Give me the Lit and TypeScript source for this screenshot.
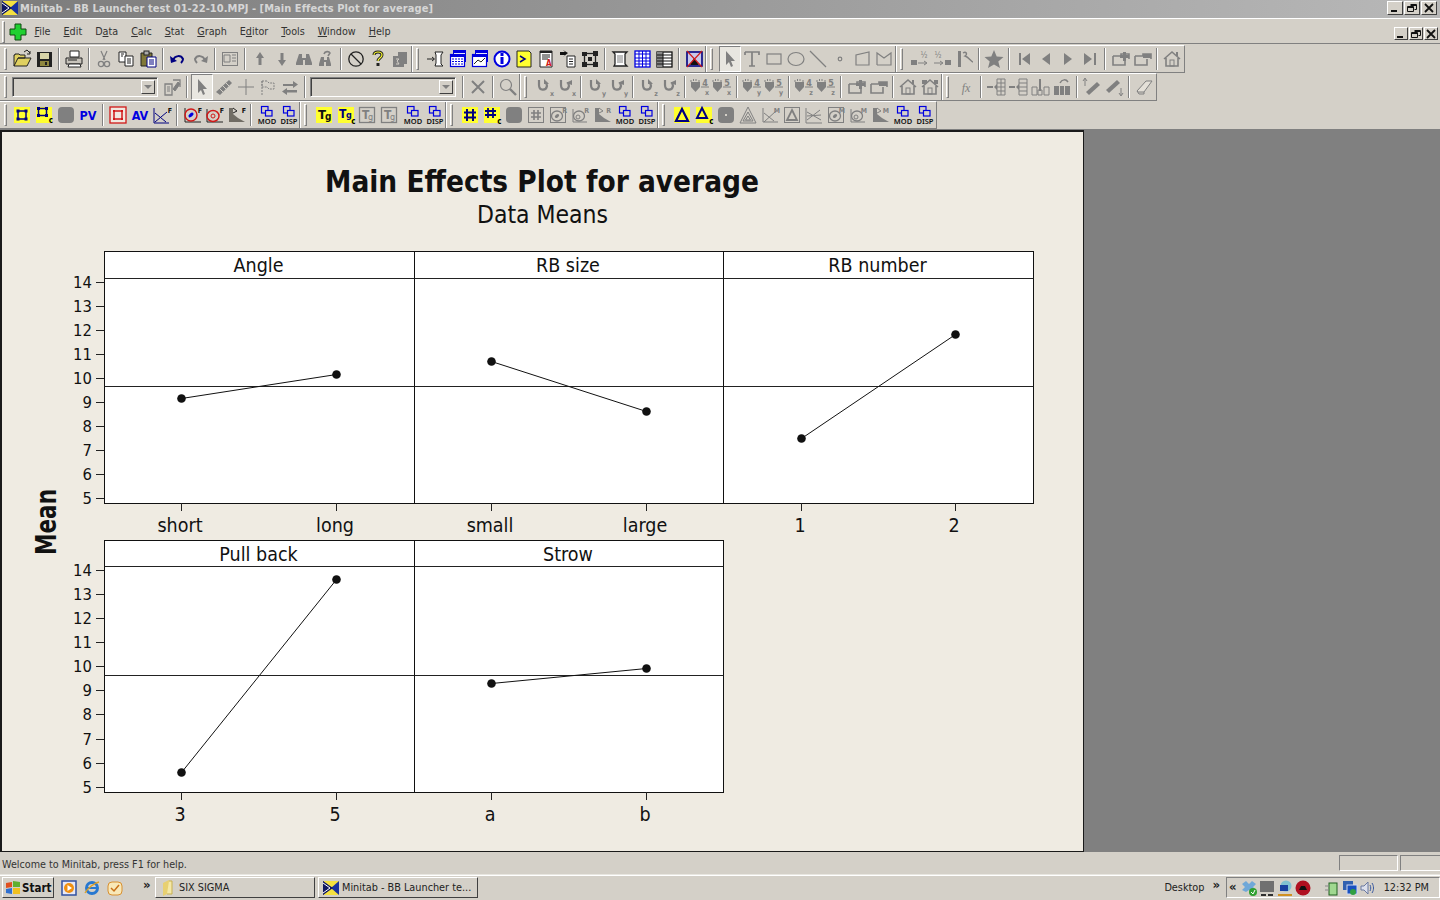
import { LitElement, html, css, svg } from "lit";
import { customElement } from "lit/decorators.js";

const G = "#808080";
const N = "#000080";
const B = "#0000e0";
const R = "#d01818";
const Y = "#ffff30";

const grey = (f: any) => svg`<g fill="none" stroke="${G}" stroke-width="1.2">${f}</g>`;
const mini = (t: string, col = "#000", x = 19.5, y = 19, s = 7) =>
  svg`<text x="${x}" y="${y}" text-anchor="end" font-size="${s}" font-weight="700" fill="${col}" font-family="DejaVu Sans" stroke="none">${t}</text>`;
const ybg = svg`<rect x="2" y="2" width="16" height="16" fill="${Y}"/>`;
const overlap = (t: string) => svg`<g fill="none" stroke="${B}" stroke-width="1.2"><rect x="5.5" y="1.5" width="6.5" height="6.5"/><rect x="9.5" y="5.5" width="6.5" height="5.5" fill="#d4d0c8"/></g><text x="11" y="18.5" text-anchor="middle" font-size="7.5" font-weight="600" fill="#111" font-family="Noto Sans">${t}</text>`;
const ringP = (c1: string, c2: string) => svg`<path d="M3 17H19M3 17V3" stroke="#222" fill="none"/><ellipse cx="9" cy="10" rx="6" ry="6" fill="none" stroke="${c1}" stroke-width="1.4"/><ellipse cx="9" cy="10" rx="3" ry="1.7" transform="rotate(-40 9 10)" fill="${c2}"/>`;
const ringG = (l: string) => svg`<rect x="2.5" y="2.5" width="15" height="15" fill="none" stroke="${G}"/><ellipse cx="9" cy="11" rx="5.5" ry="5" fill="none" stroke="${G}" stroke-width="1.3"/><ellipse cx="9" cy="11" rx="2.5" ry="1.5" transform="rotate(-40 9 11)" fill="${G}"/>${mini(l, G, 19, 8, 7)}`;
const ring2G = (l: string) => svg`<path d="M3 17H17M3 17V4" stroke="${G}" fill="none"/><ellipse cx="9" cy="11" rx="5.5" ry="5" fill="none" stroke="${G}" stroke-width="1.3"/><circle cx="8" cy="12" r="2" fill="none" stroke="${G}"/>${mini(l, G, 19, 8, 7)}`;
const hillG = (l: string) => svg`<path d="M3 3V17H19L12 13 7 9V3Z" fill="${G}"/><path d="M7 3L11 6 7 8" fill="#d4d0c8" stroke="${G}"/>${mini(l, G, 19, 8, 7)}`;
const crossG = (l: string) => svg`<path d="M3 3V17H18M4 17L16 6M4 8L14 16" fill="none" stroke="${G}"/>${mini(l, G, 20, 8, 7)}`;
const tg = (c: string) => svg`<rect x="1.5" y="2.5" width="15" height="15" fill="none" stroke="${G}" stroke-width="1.3"/><text x="4" y="14" font-size="12" font-weight="700" fill="${G}" font-family="DejaVu Sans">T</text><text x="10" y="15" font-size="9" fill="${G}" font-family="DejaVu Sans">${c}</text>`;
const curl = (d: string, a: string) => svg`<path d="M5 3V8C5 14 12 14 13 9L12 5" fill="none" stroke="${G}" stroke-width="2.2"/><path d="M${d}" fill="${G}"/>${mini(a, G, 20, 19, 7)}`;
const drop = (n: string, a: string) => svg`<path d="M1 5H10V10L5.5 15 1 10Z" fill="${G}"/><path d="M1 3v2M3.5 2v2M6 2v2M9 3v2" stroke="${G}"/><text x="15" y="9" text-anchor="middle" font-size="9" font-weight="700" fill="${G}" font-family="DejaVu Sans">${n}</text><path d="M11 10H19" stroke="${G}"/>${mini(a, G, 19, 18, 7)}`;
const folderP = (plus: boolean) => svg`<path d="M3 7H11V5H19V10M3 7V16H15V10" fill="none" stroke="${G}" stroke-width="1.6"/>${plus ? svg`<path d="M13 3H16V6H19V9H16V12H13V9H10V6H13Z" fill="${G}"/>` : svg`<path d="M11 5H19V9H11Z" fill="${G}"/>`}`;
const house = (extra: boolean) => svg`<path d="M2 10L10 3 18 10M4 9V17H16V9" fill="none" stroke="${G}" stroke-width="1.6"/><rect x="8" y="11" width="4" height="6" fill="none" stroke="${G}"/>${extra ? svg`<path d="M2 3H7V7H2ZM14 3H18V7H14Z" fill="${G}"/>` : svg`<path d="M14 3H16V7H14Z" fill="${G}"/>`}`;
const blueWin = (inner: any) => svg`<rect x="5.5" y="1.5" width="12" height="11" fill="#fff" stroke="${B}"/><rect x="5" y="1" width="13" height="3" fill="${B}"/><rect x="2.5" y="5.5" width="14" height="12" fill="#fff" stroke="${B}" stroke-width="1.2"/><rect x="2" y="5" width="15" height="3" fill="${B}"/>${inner}`;

const icons: Record<string, any> = {
  open: svg`<path d="M2 17V6H3V5H7L8 6H13V9H6L2 17H15L19 9H6" fill="#e0d060" stroke="#222"/><path d="M12 3L15 1 18 4M18 2V5H15" fill="none" stroke="#222"/>`,
  save: svg`<rect x="3" y="3" width="15" height="15" fill="#222"/><rect x="6" y="4" width="9" height="6" fill="#d8d4a8"/><rect x="6" y="12" width="9" height="5" fill="#908840"/><rect x="11" y="13" width="2" height="3" fill="#222"/>`,
  print: svg`<path d="M6 2H15V8H6Z" fill="#fff" stroke="#222"/><path d="M2 9H18V15H2Z" fill="#c8c4bc" stroke="#222"/><path d="M5 15H16L17 18H4Z" fill="#fff" stroke="#222"/><path d="M4 11H13" stroke="#222"/>`,
  cut: svg`<path d="M7 2L11 11M13 2L9 11" stroke="${G}" stroke-width="1.2"/><circle cx="7" cy="15" r="2.6" fill="none" stroke="${G}" stroke-width="1.3"/><circle cx="13" cy="15" r="2.6" fill="none" stroke="${G}" stroke-width="1.3"/>`,
  copy: svg`<path d="M3 3H10V13H3Z" fill="#fff" stroke="#222"/><path d="M9 7H17V17H9Z" fill="#fff" stroke="#222"/><path d="M5 5H8M5 7H7M11 10H15M11 12H15M11 14H15" stroke="#222"/>`,
  paste: svg`<path d="M3 4H14V17H3Z" fill="#807838" stroke="#222"/><rect x="6" y="2" width="5" height="4" fill="#aaa" stroke="#222"/><path d="M9 8H18V18H9Z" fill="#fff" stroke="${N}"/><path d="M11 11H16M11 13H16M11 15H16" stroke="${N}"/>`,
  undo: svg`<path d="M5 11C7 6 13 6 15 10 15 12 14 13 13 14" fill="none" stroke="${N}" stroke-width="2"/><path d="M2 7L9 12 3 14Z" fill="${N}"/>`,
  redo: svg`<path d="M15 11C13 6 7 6 5 10 5 12 6 13 7 14" fill="none" stroke="${G}" stroke-width="2"/><path d="M18 7L11 12 17 14Z" fill="${G}"/>`,
  sess: svg`<rect x="2.5" y="3.5" width="15" height="13" fill="none" stroke="${G}"/><path d="M4 6H10V13H4ZM12 6H16M12 9H16M12 12H16" stroke="${G}" fill="none"/>`,
  up: svg`<path d="M10 3L14 9H11.5V16H8.5V9H6Z" fill="${G}"/>`,
  down: svg`<path d="M10 17L14 11H11.5V4H8.5V11H6Z" fill="${G}"/>`,
  find: svg`<path d="M2 14L5 5H8V9H12V5H15L18 14V16H11V11H9V16H2Z" fill="${G}"/>`,
  findr: svg`<path d="M3 15L5 8H8V11H11V8H13L15 15V17H10V13H8V17H3Z" fill="${G}"/><path d="M8 5C9 2 13 2 14 4L12 7" fill="none" stroke="${G}" stroke-width="1.6"/>`,
  stop: svg`<circle cx="10" cy="10" r="7.2" fill="none" stroke="#222" stroke-width="1.3"/><path d="M5 5L15 15" stroke="#222" stroke-width="1.3"/>`,
  help: svg`<path d="M6 6C6 2 14 2 14 6 14 9 10 9 10 12" fill="none" stroke="#222" stroke-width="3"/><path d="M6 6C6 2 14 2 14 6 14 9 10 9 10 12" fill="none" stroke="${Y}" stroke-width="1.2"/><rect x="8.5" y="14" width="3" height="3" fill="#222"/>`,
  sigma: svg`<path d="M8 3H17V15H14V18H3V7H8Z" fill="${G}"/><path d="M6 10H9L7 12 9 15H6" fill="none" stroke="#d4d0c8"/>`,
  proj: svg`<path d="M9 3H17L15 6V15L17 17H9L10 14V6Z" fill="#fff" stroke="#222"/><path d="M1 10H8M6 8L8.5 10 6 12" fill="none" stroke="#222"/>`,
  dataw: blueWin(svg`<path d="M4 10H15M4 12.5H15M4 15H15" stroke="${B}" stroke-dasharray="2 1"/>`),
  graphw: blueWin(svg`<path d="M4 15L8 11 11 13 15 9" stroke="#222" fill="none"/>`),
  info: svg`<circle cx="10" cy="10" r="7.5" fill="#fff" stroke="${B}" stroke-width="2"/><rect x="8.5" y="8" width="3" height="7" fill="${B}"/><rect x="8.5" y="4" width="3" height="3" fill="${B}"/>`,
  hist: svg`<path d="M3 2H15L17 4V18H3Z" fill="${Y}" stroke="#222"/><path d="M6 7L11 10 6 13" fill="none" stroke="${N}" stroke-width="1.5"/>`,
  rep: svg`<path d="M4 2H16V18H4Z" fill="#fff" stroke="#222"/><path d="M4 2H16V4H4Z" fill="#222"/><path d="M6 6H14M6 8H14M6 10H12" stroke="#222"/><text x="10" y="17" font-size="8" font-weight="700" fill="${R}" font-family="DejaVu Sans">A</text>`,
  tolist: svg`<path d="M2 3L7 3 5 1 10 4 5 8 7 6H2Z" fill="#111"/><path d="M9 7H17V18H9Z" fill="#fff" stroke="#222"/><path d="M11 10H15M11 12.5H15M11 15H15" stroke="#222"/>`,
  node: svg`<rect x="4.5" y="4.5" width="11" height="11" fill="none" stroke="#222" stroke-width="1.3"/><path d="M2 3H7V7H2ZM13 2H18V7H13ZM2 13H7V18H2ZM13 13H18V18H13ZM8 8H12V12H8Z" fill="#222"/>`,
  scroll: svg`<path d="M3 3H17L15 5V15L17 17H4L5 15V5Z" fill="#fff" stroke="#222" stroke-width="1.3"/><path d="M7 7H13M7 9H13M7 11H13M7 13H13" stroke="${G}"/>`,
  bgrid: svg`<rect x="3" y="2" width="15" height="16" fill="#fff" stroke="${B}" stroke-width="1.3"/><path d="M3 5H18M3 9H18M3 12H18M3 15H18M7 2V18M10.5 2V18M14 2V18" stroke="${B}"/>`,
  kgrid: svg`<rect x="3" y="3" width="15" height="15" fill="#fff" stroke="#111" stroke-width="1.3"/><path d="M3 3H9V18H3Z" fill="#888"/><path d="M3 6H18M3 9H18M3 12H18M3 15H18M9 3V18" stroke="#111"/>`,
  xwin: svg`<rect x="3" y="3" width="15" height="14" fill="#c8c8e8" stroke="${N}" stroke-width="1.6"/><path d="M6 16L10 9 15 16Z" fill="#111"/><path d="M3 2L18 18M18 2L3 18" stroke="${R}" stroke-width="1.1"/>`,
  arrow: svg`<path d="M6 2V16L9 13 11 18 13 17 11 12H15Z" fill="${G}"/>`,
  T: svg`<path d="M3 3H17V6M3 3V6M10 3V17M7 17H13" fill="none" stroke="${G}" stroke-width="1.7"/>`,
  rect: grey(svg`<rect x="3" y="5" width="14" height="10"/>`),
  ell: grey(svg`<ellipse cx="10" cy="10" rx="8" ry="6.5"/>`),
  line: grey(svg`<path d="M2 2L18 18"/>`),
  dot: grey(svg`<circle cx="10" cy="10" r="1.8"/>`),
  poly: grey(svg`<path d="M4 6V16H17V3Z"/>`),
  pline: grey(svg`<path d="M3 16V4L10 9 17 4V16H3"/>`),
  ralign: svg`<rect x="1" y="11" width="6" height="5" fill="${G}"/><path d="M8 14H16M14 12L17 14 14 16" stroke="${G}" fill="none"/><text x="14" y="9" text-anchor="middle" font-size="8" fill="${G}" font-family="DejaVu Sans">½</text>`,
  lalign: svg`<rect x="13" y="11" width="6" height="5" fill="${G}"/><path d="M2 14H10M8 12L11 14 8 16" stroke="${G}" fill="none"/><text x="6" y="9" text-anchor="middle" font-size="8" fill="${G}" font-family="DejaVu Sans">½</text>`,
  brushb: svg`<rect x="4" y="2" width="3" height="16" fill="${G}"/><path d="M9 4C12 2 14 5 11 7 15 8 17 13 19 13" fill="none" stroke="${G}" stroke-width="1.4"/>`,
  star: svg`<path d="M10 1L12.7 7.5 19.5 8 14.3 12.5 16 19 10 15.5 4 19 5.7 12.5 0.5 8 7.3 7.5Z" fill="${G}"/>`,
  first: svg`<path d="M5 4H7V16H5ZM16 4V16L8 10Z" fill="${G}"/>`,
  prev: svg`<path d="M14 4V16L6 10Z" fill="${G}"/>`,
  next: svg`<path d="M6 4V16L14 10Z" fill="${G}"/>`,
  last: svg`<path d="M14 4H16V16H14ZM4 4V16L12 10Z" fill="${G}"/>`,
  fadd: folderP(true),
  fsub: folderP(false),
  home: house(false),
  home2: house(true),
  props: svg`<path d="M3 7H10V18H3ZM11 3H18V10" fill="none" stroke="${G}" stroke-width="1.3"/><path d="M5 10H8M5 12H8M5 14H8M11 12L16 5 18 7 13 14Z" stroke="${G}" fill="${G}"/>`,
  brush: svg`<path d="M2 15L15 3 18 6 6 18Z" fill="${G}"/><path d="M5 11L9 15M8 8L12 12M11 5L15 9" stroke="#d4d0c8"/>`,
  plus: svg`<path d="M10 2V18M2 10H18" stroke="${G}"/>`,
  flag: svg`<path d="M4 4H9L11 6H16V12H11L9 10H4ZM4 4V18" fill="none" stroke="${G}" stroke-dasharray="2 1"/>`,
  swap: svg`<path d="M3 7H13V4L18 7.5 13 11V9H3ZM17 13H7V11L2 14.5 7 18V15.5H17Z" fill="${G}"/>`,
  xx: svg`<path d="M4 4L16 16M16 4L4 16" stroke="${G}" stroke-width="2"/>`,
  zoom: svg`<circle cx="8" cy="8" r="5.5" fill="none" stroke="${G}" stroke-width="1.2"/><path d="M12 12L18 18" stroke="${G}" stroke-width="2.4"/>`,
  rx1: curl("10 2L15 7H10Z", "x"), rx2: curl("16 3L10 6 16 8Z", "x"),
  ry1: curl("10 2L15 7H10Z", "y"), ry2: curl("16 3L10 6 16 8Z", "y"),
  rz1: curl("10 2L15 7H10Z", "z"), rz2: curl("16 3L10 6 16 8Z", "z"),
  dx1: drop("4", "x"), dx2: drop("5", "x"),
  dy1: drop("4", "y"), dy2: drop("5", "y"),
  dz1: drop("4", "z"), dz2: drop("5", "z"),
  fx: svg`<text x="10" y="15" text-anchor="middle" font-size="12" font-style="italic" font-family="Liberation Serif" fill="${G}">fx</text>`,
  merge1: svg`<path d="M1 9H7V11H1Z" fill="${G}"/><path d="M8 10l3-3v6Z" fill="${G}"/><path d="M11 2H19V18H11ZM11 6H19M11 10H19M11 14H19M15 2V18" fill="none" stroke="${G}"/>`,
  merge2: svg`<path d="M1 9H7V11H1Z" fill="${G}"/><path d="M8 10l3-3v6Z" fill="${G}"/><path d="M11 2H19V18H11ZM11 6H19M11 10H19M11 14H19" fill="none" stroke="${G}"/>`,
  bars1: svg`<path d="M2 10H7V18H2ZM8 13H12V18H8ZM14 10H19V18H14Z" fill="none" stroke="${G}"/><path d="M9 2H11V14H9Z" fill="${G}"/>`,
  bars2: svg`<path d="M2 9H7V18H2ZM8 9H12V18H8ZM13 9H18V18H13Z" fill="${G}"/><path d="M8 6C10 2 14 2 16 5" fill="none" stroke="${G}" stroke-width="1.5"/>`,
  br1: svg`<path d="M4 15L15 5 18 8 7 18Z" fill="${G}"/><path d="M3 2V9M1 4L3 1 5 4" stroke="${G}" fill="none"/>`,
  br2: svg`<path d="M2 13L13 3 16 6 5 16Z" fill="${G}"/><path d="M17 11V18M15 16L17 19 19 16" stroke="${G}" fill="none"/>`,
  eraser: svg`<path d="M3 14L12 4H18L10 15H4Z" fill="#e4e0d8" stroke="${G}"/><path d="M3 14L5 17H10L10 15" fill="none" stroke="${G}"/>`,
  sq: svg`${ybg}<rect x="6" y="6" width="8" height="8" fill="none" stroke="${N}" stroke-width="1.5"/><path d="M4.5 4.5h3v3h-3zM12.5 4.5h3v3h-3zM4.5 12.5h3v3h-3zM12.5 12.5h3v3h-3z" fill="${N}"/>`,
  sqc: svg`${ybg}<rect x="4.5" y="3.5" width="8" height="7" fill="none" stroke="${N}" stroke-width="1.5"/><path d="M3 2h3v3h-3zM11 2h3v3h-3zM3 9h3v3h-3zM11 9h3v3h-3z" fill="${N}"/>${mini("c", "#000", 19, 18, 8)}`,
  blob: svg`<rect x="2" y="2" width="16" height="16" rx="4" fill="${G}"/>`,
  pv: svg`<text x="10" y="15" text-anchor="middle" font-size="12.5" font-weight="700" fill="${B}" font-family="DejaVu Sans" font-stretch="condensed">PV</text>`,
  rsq: svg`<rect x="2" y="2" width="16" height="16" fill="#f0e8e0" stroke="${R}" stroke-width="1.3"/><rect x="6" y="6" width="8" height="8" fill="none" stroke="${R}" stroke-width="1.5"/><path d="M5 5h2v2h-2zM13 5h2v2h-2zM5 13h2v2h-2zM13 13h2v2h-2z" fill="${R}"/>`,
  av: svg`<text x="10" y="15" text-anchor="middle" font-size="12.5" font-weight="700" fill="${B}" font-family="DejaVu Sans" font-stretch="condensed">AV</text>`,
  xF: svg`<path d="M2 3V18H17" fill="none" stroke="${N}"/><path d="M3 17L15 7M3 8L14 17" fill="none" stroke="${N}"/>${mini("F", "#111", 20, 8, 7)}`,
  r1F: svg`${ringP(R, B)}${mini("F", "#111", 20, 8, 7)}`,
  r2F: svg`<path d="M3 17H19M3 17V4" stroke="#222" fill="none"/><ellipse cx="9" cy="11" rx="6" ry="5.5" fill="none" stroke="${R}" stroke-width="1.4"/><circle cx="9" cy="11" r="2" fill="none" stroke="${R}"/>${mini("F", "#111", 20, 8, 7)}`,
  hF: svg`<path d="M3 3V17H19L12 13 7 9V3Z" fill="#706c64"/><path d="M7 3L11 6 7 8" fill="#d4d0c8" stroke="#222"/>${mini("F", "#111", 20, 8, 7)}`,
  mod: overlap("MOD"),
  disp: overlap("DISP"),
  tg: svg`${ybg}<text x="4" y="14" font-size="13" font-weight="700" fill="#111" font-family="DejaVu Sans">T</text><text x="11" y="15" font-size="10" font-weight="700" fill="#111" font-family="DejaVu Sans">g</text>`,
  tgc: svg`${ybg}<text x="3" y="13" font-size="12" font-weight="700" fill="${N}" font-family="DejaVu Sans">T</text><text x="10" y="13" font-size="9" font-weight="700" fill="${N}" font-family="DejaVu Sans">g</text>${mini("c", "#000", 19.5, 19, 8)}`,
  tgg: tg("g"),
  hash: svg`${ybg}<path d="M7 4V16M13 4V16M4 7.5H16M4 12.5H16" stroke="${N}" stroke-width="2"/>`,
  hashc: svg`${ybg}<path d="M6 3V13M11 3V13M3 6H14M3 10H14" stroke="${N}" stroke-width="1.8"/>${mini("c", "#000", 19.5, 19, 8)}`,
  gridg: svg`<rect x="2.5" y="2.5" width="15" height="15" fill="none" stroke="${G}"/><path d="M8 5V15M12 5V15M5 8H15M5 12H15" stroke="${G}" stroke-width="1.6"/>`,
  r1R: ringG("R"), r2R: ring2G("R"), hR: hillG("R"),
  r1M: ringG("M"), r2M: ring2G("M"), hM: hillG("M"),
  tri: svg`${ybg}<path d="M10 4L16 16H4Z" fill="none" stroke="${N}" stroke-width="2.2"/>`,
  tric: svg`${ybg}<path d="M8 3L13 13H3Z" fill="none" stroke="${N}" stroke-width="2"/>${mini("c", "#000", 19.5, 19, 8)}`,
  blobd: svg`<rect x="2" y="2" width="16" height="16" rx="4" fill="${G}"/><rect x="9" y="9" width="2" height="2" fill="#d4d0c8"/>`,
  trin: svg`<path d="M10 2L18 18H2ZM10 7L15 16H5ZM10 11L12.5 15H7.5Z" fill="none" stroke="${G}"/>`,
  xM: crossG("M"),
  trib: svg`<rect x="2.5" y="2.5" width="15" height="15" fill="none" stroke="${G}"/><path d="M10 5L15 15H5Z" fill="none" stroke="${G}" stroke-width="1.8"/>`,
  web: svg`<path d="M2 3V18H18M3 7L17 15M3 15L16 5M3 11L17 10" fill="none" stroke="${G}"/>`,
};

const row1 = "grip open save | print | cut copy paste | undo redo | sess | up down find findr | stop help sigma brk proj dataw graphw info hist rep tolist node | scroll bgrid kgrid | xwin brk *arrow T rect ell line dot poly pline brk ralign lalign brushb | star | first prev next last | fadd fsub | home";
const row2 = "grip combo props | *arrow brush plus flag swap | combo | xx | zoom brk rx1 rx2 | ry1 ry2 | rz1 rz2 | dx1 dx2 | dy1 dy2 | dz1 dz2 | fadd fsub | home home2 brk fx | merge1 merge2 bars1 bars2 | br1 br2 | eraser";
const row3 = "grip sq sqc blob pv | rsq av xF | r1F r2F hF | mod disp brk tg tgc tgg tgg mod disp brk hash hashc blob gridg r1R r2R hR mod disp brk tri tric blobd trin xM trib web r1M r2M hM mod disp";

const menus: [string, number][] = [["File", 0], ["Edit", 0], ["Data", 1], ["Calc", 0], ["Stat", 0], ["Graph", 0], ["Editor", 1], ["Tools", 0], ["Window", 0], ["Help", 0]];

interface Panel { name: string; x: number; w: number; y: number; a: number; b: number; pts: number[]; labs: string[]; }
const panels: Panel[] = [
  { name: "Angle", x: 104.5, w: 310, y: 251, a: 398, b: 374, pts: [181, 336], labs: ["short", "long"] },
  { name: "RB size", x: 414.5, w: 309, y: 251, a: 361, b: 411, pts: [491, 646], labs: ["small", "large"] },
  { name: "RB number", x: 723.5, w: 310, y: 251, a: 438, b: 334, pts: [801, 955], labs: ["1", "2"] },
  { name: "Pull back", x: 104.5, w: 310, y: 540, a: 772, b: 579, pts: [181, 336], labs: ["3", "5"] },
  { name: "Strow", x: 414.5, w: 309, y: 540, a: 683, b: 668, pts: [491, 646], labs: ["a", "b"] },
];
const nums = [14, 13, 12, 11, 10, 9, 8, 7, 6, 5];

const flag = svg`<rect width="16" height="14" fill="#1830a0"/><path d="M0 0H16L8 7Z" fill="#f4e040"/><path d="M0 14H16L8 7Z" fill="#f4e040"/><path d="M0 0L10 7 0 14Z" fill="#101860"/><path d="M0 2L7 7 0 12" fill="none" stroke="#fff"/>`;

@customElement("app-root")
export class AppRoot extends LitElement {
  static styles = css`
    :host { display: flex; flex-direction: column; width: 1440px; height: 900px; overflow: hidden; background: #d4d0c8; font-family: "DejaVu Sans", sans-serif; font-stretch: condensed; font-size: 10.7px; color: #222; }
    .title { height: 18px; flex: none; display: flex; align-items: center; background: linear-gradient(90deg, #7c7c7c, #b8b8b8); color: #d6d6d6; font-weight: 700; font-size: 11px; letter-spacing: 0.055px; padding: 0 3px 2px 2px; box-sizing: border-box; gap: 2px; }
    .title span { flex: 1; white-space: nowrap; }
    .sep-white { height: 2px; flex: none; background: #fff; border-bottom: 1px solid #d4d0c8; box-sizing: border-box; }
    .menubar { height: 24px; flex: none; display: flex; align-items: center; box-sizing: border-box; padding-left: 2px; border-bottom: 1px solid #808080; position: relative; }
    .grip { width: 3px; height: 22px; flex: none; box-sizing: border-box; border-left: 1px solid #fff; border-right: 1px solid #808080; border-bottom: 1px solid #808080; border-top: 1px solid #fff; background: #d4d0c8; }
    .plus { width: 20px; height: 20px; margin: 0 0 0 3px; flex: none; }
    .mi { padding: 0 6.5px; white-space: nowrap; color: #333; }
    .ctrls { position: absolute; right: 2px; top: 7px; }
    .ctrls, .ctrls2 { display: flex; gap: 1px; }
    .ctrls .wb { width: 14px; height: 13px; }
    .wb { width: 16px; height: 14px; background: #d4d0c8; border: 1px solid; border-color: #fff #404040 #404040 #fff; box-sizing: border-box; display: grid; place-items: center; }
    .wb svg { width: 12px; height: 10px; display: block; }
    .bars { flex: none; height: 86px; padding-top: 1px; box-sizing: border-box; border-bottom: 1px solid #808080; display: flex; flex-direction: column; }
    .tb { display: flex; align-items: center; height: 28px; flex: none; width: fit-content; border-top: 1px solid #fff; border-right: 1px solid #808080; border-bottom: 1px solid #808080; box-sizing: border-box; padding-right: 1px; }
    .g0 { width: 11px; flex: none; display: flex; padding-left: 4px; box-sizing: border-box; }
    .cell { width: 22px; height: 26px; flex: none; display: grid; place-items: center; box-sizing: border-box; }
    .cell svg { width: 20px; height: 20px; display: block; overflow: visible; }
    .cell.on { background: #e8e6e0; border: 1px solid; border-color: #808080 #fff #fff #808080; }
    .s { width: 8px; flex: none; display: flex; justify-content: center; }
    .s i { width: 2px; height: 22px; border-left: 1px solid #808080; border-right: 1px solid #fff; box-sizing: border-box; display: block; }
    .brk { width: 14px; height: 26px; flex: none; display: flex; align-items: center; gap: 3px; }
    .brk b { width: 2px; height: 100%; background: linear-gradient(90deg, #808080 50%, #fff 50%); display: block; }
    .combo { width: 150px; flex: none; padding: 0 3px 0 1px; box-sizing: border-box; }
    .combo div { height: 20px; background: #d4d0c8; border: 1px solid; border-color: #808080 #fff #fff #808080; box-shadow: inset 1px 1px 0 #404040; display: flex; justify-content: flex-end; align-items: stretch; padding: 2px; box-sizing: border-box; }
    .combo span { width: 14px; border: 1px solid; border-color: #fff #404040 #404040 #fff; display: grid; place-items: center; box-sizing: border-box; }
    .combo span::after { content: ""; border: 4px solid transparent; border-top-color: #808080; margin-top: 4px; }
    .main { flex: none; height: 722px; display: flex; background: #808080; }
    .graph { width: 1084px; height: 722px; flex: none; box-sizing: border-box; background: #efebe2; border: 2px solid #1a1a1a; border-right-width: 1px; border-bottom-width: 1px; }
    .graph svg { display: block; width: 1081px; height: 719px; }
    .status { height: 23px; flex: none; display: flex; align-items: center; padding: 2px 0 0 2px; color: #333; gap: 2px; border-bottom: 1px solid #e8e6e0; box-sizing: border-box; }
    .status span:first-child { flex: 1; }
    .sp { height: 16px; margin-top: -2px; border: 1px solid; border-color: #808080 #fff #fff #808080; box-sizing: border-box; }
    .sp.a { width: 59px; }
    .sp.b { width: 41px; margin-right: -1px; }
    .task { flex: none; height: 25px; display: flex; align-items: center; border-top: 1px solid #fff; box-sizing: border-box; padding: 0 0 1px 2px; font-size: 10.8px; color: #222; }
    .start { width: 52px; height: 21px; flex: none; box-sizing: border-box; border: 1px solid; border-color: #fff #404040 #404040 #fff; display: flex; align-items: center; font-weight: 700; font-size: 11.5px; gap: 1px; padding-left: 2px; color: #111; }
    .start svg, .ql svg, .tray svg, .tbtn svg { width: 16px; height: 16px; flex: none; display: block; }
    .ql { display: flex; gap: 7px; margin-left: 7px; width: 94px; flex: none; align-items: center; }
    .chev { font-size: 13px; font-weight: 700; line-height: 1; margin-top: -6px; }
    .ql .chev { margin-left: 13px; }
    .tbtn { width: 160px; height: 21px; flex: none; box-sizing: border-box; border: 1px solid; border-color: #fff #404040 #404040 #fff; display: flex; align-items: center; gap: 3px; padding-left: 4px; margin-right: 3px; white-space: nowrap; }
    .spacer { flex: 1; }
    .desk { margin-right: 8px; }
    .tray { width: 214px; height: 21px; flex: none; box-sizing: border-box; border: 1px solid; border-color: #808080 #fff #fff #808080; display: flex; align-items: center; margin-left: 6px; padding-left: 2px; gap: 2px; }
    .tray .time { margin-left: auto; margin-right: 10px; white-space: nowrap; }
    .tray .gap { width: 9px; flex: none; }
    .tray .chev { margin: -2px 2px 0 0; font-size: 13px; }
    .t { font-family: "DejaVu Sans", sans-serif; font-stretch: condensed; fill: #111; }
  `;

  private bar(spec: string) {
    return spec.split(" ").map((t) => {
      if (t === "grip") return html`<div class="g0"><div class="grip"></div></div>`;
      if (t === "|") return html`<div class="s"><i></i></div>`;
      if (t === "brk") return html`<div class="brk"><b></b><div class="grip"></div></div>`;
      if (t === "combo") return html`<div class="combo"><div><span></span></div></div>`;
      const on = t.startsWith("*");
      const name = on ? t.slice(1) : t;
      return html`<div class="cell ${on ? "on" : ""}"><svg viewBox="0 0 20 20">${icons[name]}</svg></div>`;
    });
  }

  private btns() {
    return html`
      <div class="wb"><svg viewBox="0 0 12 10"><path d="M2 7H8V9H2Z" fill="#111"/></svg></div>
      <div class="wb"><svg viewBox="0 0 12 10"><path d="M4.5 1.5H10.5V6.5H8.5M1.5 3.5H7.5V8.5H1.5ZM1.5 4.5H7.5M4.5 2.5H10.5" fill="none" stroke="#111"/></svg></div>
      <div class="wb"><svg viewBox="0 0 12 10"><path d="M2 1L10 9M10 1L2 9" stroke="#111" stroke-width="1.8"/></svg></div>`;
  }

  private panel(p: Panel) {
    const top = p.y, hb = p.y + (p.y === 251 ? 27 : 26), bot = p.y === 251 ? 503 : 792, w = p.w;
    const ref = p.y === 251 ? 386 : 675;
    const y14 = p.y === 251 ? 281.5 : 570, step = 24.08;
    return svg`
      <rect x="${p.x}" y="${top + 0.5}" width="${w}" height="${bot - top}" fill="#fff" stroke="#111"/>
      <path d="M${p.x} ${hb + 0.5}H${p.x + w}M${p.x} ${ref + 0.5}H${p.x + w}" stroke="#222"/>
      <text class="t" x="${p.x + w / 2 - 1}" y="${top + 21}" text-anchor="middle" font-size="19.5">${p.name}</text>
      ${p.pts.map((x, i) => svg`
        <path d="M${x + 0.5} ${bot}v8" stroke="#222"/>
        <text class="t" x="${x - 1}" y="${bot + 29}" text-anchor="middle" font-size="19.5">${p.labs[i]}</text>`)}
      <path d="M${p.pts[0] + 0.5} ${p.a + 0.5}L${p.pts[1] + 0.5} ${p.b + 0.5}" stroke="#111" fill="none"/>
      <circle cx="${p.pts[0] + 0.5}" cy="${p.a + 0.5}" r="4.3" fill="#111"/>
      <circle cx="${p.pts[1] + 0.5}" cy="${p.b + 0.5}" r="4.3" fill="#111"/>
      ${p.x < 110 ? nums.map((n, i) => svg`
        <path d="M96 ${Math.round(y14 + i * step) + 0.5}h8" stroke="#222"/>
        <text class="t" x="92" y="${y14 + i * step + 6}" text-anchor="end" font-size="16.5">${n}</text>`) : ""}
    `;
  }

  render() {
    return html`
      <div class="title"><svg width="16" height="14" viewBox="0 0 16 14">${flag}</svg><span>Minitab - BB Launcher test 01-22-10.MPJ - [Main Effects Plot for average]</span>
        <div class="ctrls2">${this.btns()}</div></div>
      <div class="sep-white"></div>
      <div class="menubar">
        <div class="grip"></div>
        <svg class="plus" viewBox="0 0 20 20"><path d="M7 2H13V7H18V13H13V18H7V13H2V7H7Z" fill="#20d030" stroke="#104810"/></svg>
        ${menus.map(([m, u]) => html`<span class="mi">${m.slice(0, u)}<u>${m[u]}</u>${m.slice(u + 1)}</span>`)}
        <div class="ctrls">${this.btns()}</div>
      </div>
      <div class="bars">
        <div class="tb">${this.bar(row1)}</div>
        <div class="tb">${this.bar(row2)}</div>
        <div class="tb">${this.bar(row3)}</div>
      </div>
      <div class="main">
        <div class="graph">
          <svg viewBox="2 132 1081 719">
            <text class="t" x="542" y="192" text-anchor="middle" font-size="31" font-weight="700" textLength="434" lengthAdjust="spacingAndGlyphs">Main Effects Plot for average</text>
            <text class="t" x="542.5" y="223" text-anchor="middle" font-size="24.5">Data Means</text>
            <text class="t" transform="translate(56 522) rotate(-90)" text-anchor="middle" font-size="28" font-weight="700" textLength="66" lengthAdjust="spacingAndGlyphs">Mean</text>
            ${panels.map((p) => this.panel(p))}
          </svg>
        </div>
      </div>
      <div class="status"><span>Welcome to Minitab, press F1 for help.</span><div class="sp a"></div><div class="sp b"></div></div>
      <div class="task">
        <div class="start"><svg viewBox="0 0 16 16"><path d="M1 3L7 2V7L1 8Z" fill="#e05020"/><path d="M8 1L15 2V7L8 7Z" fill="#60b030"/><path d="M1 9L7 8V14L1 13Z" fill="#3070d0"/><path d="M8 8H15V14L8 14Z" fill="#f0c020"/></svg>Start</div>
        <div class="ql">
          <svg viewBox="0 0 16 16"><rect x="1" y="1" width="14" height="14" fill="#e8e8f4" stroke="#3050a0" stroke-width="1.5"/><circle cx="8" cy="8" r="5" fill="#f09010"/><path d="M6.5 5L11 8 6.5 11Z" fill="#fff"/></svg>
          <svg viewBox="0 0 16 16"><circle cx="8" cy="8" r="5.5" fill="none" stroke="#2878d0" stroke-width="3"/><path d="M4 8H12" stroke="#2878d0" stroke-width="2"/><path d="M1 13C4 8 10 3 15 2" fill="none" stroke="#e0a020" stroke-width="1.3"/></svg>
          <svg viewBox="0 0 16 16"><rect x="1" y="2" width="14" height="13" rx="4" fill="#f8e8b8" stroke="#d89030"/><path d="M4 8L7 11 12 5" fill="none" stroke="#c87018" stroke-width="1.5"/></svg>
          <span class="chev">»</span>
        </div>
        <div class="tbtn"><svg viewBox="0 0 16 16"><path d="M3 3L9 0V13L3 16Z" fill="#e8d070"/><path d="M9 1H12V14H7" fill="#f4e8a8" stroke="#c8b050"/></svg>SIX SIGMA</div>
        <div class="tbtn"><svg viewBox="0 0 16 14">${flag}</svg>Minitab - BB Launcher te...</div>
        <div class="spacer"></div>
        <span class="desk">Desktop</span>
        <span class="chev">»</span>
        <div class="tray">
          <span class="chev">«</span>
          <svg viewBox="0 0 16 16"><path d="M1 4L5 1 8 4 11 1 15 4 12 7 15 10 11 12 8 10 5 12 1 10 4 7Z" fill="#70a8d8"/><circle cx="12" cy="12" r="4" fill="#30a030"/><path d="M10 12L12 14 14 10" stroke="#fff" fill="none"/></svg>
          <svg viewBox="0 0 16 16"><rect x="1" y="1" width="14" height="11" fill="#707070"/><path d="M2 14H7V16H2ZM9 14H14V16H9Z" fill="#303030"/></svg>
          <svg viewBox="0 0 16 16"><circle cx="9" cy="6" r="5.5" fill="#80c0d0"/><rect x="3" y="5" width="8" height="6" fill="#1840a0"/><path d="M1 15H15" stroke="#d09020" stroke-width="2"/></svg>
          <svg viewBox="0 0 16 16"><circle cx="8" cy="8" r="7.5" fill="#b01020"/><path d="M4 10L6 6H10L12 10Z" fill="#111"/></svg>
          <span class="gap"></span>
          <svg viewBox="0 0 16 16"><rect x="5" y="3" width="8" height="12" fill="#a0d890" stroke="#206020"/><path d="M1 6H5M1 10H5" stroke="#888"/></svg>
          <svg viewBox="0 0 16 16"><rect x="1" y="1" width="10" height="9" fill="#3060b0"/><rect x="5" y="5" width="10" height="9" fill="#1850c0" stroke="#d0d8f0"/><circle cx="11" cy="12" r="3" fill="#30a040"/></svg>
          <svg viewBox="0 0 16 16"><path d="M1 6H4L8 2V14L4 10H1Z" fill="#dce0ec" stroke="#6878a0"/><path d="M10 5C11 7 11 9 10 11M12 3C14 6 14 10 12 13" fill="none" stroke="#3858a0"/></svg>
          <span class="time">12:32 PM</span>
        </div>
      </div>
    `;
  }
}
